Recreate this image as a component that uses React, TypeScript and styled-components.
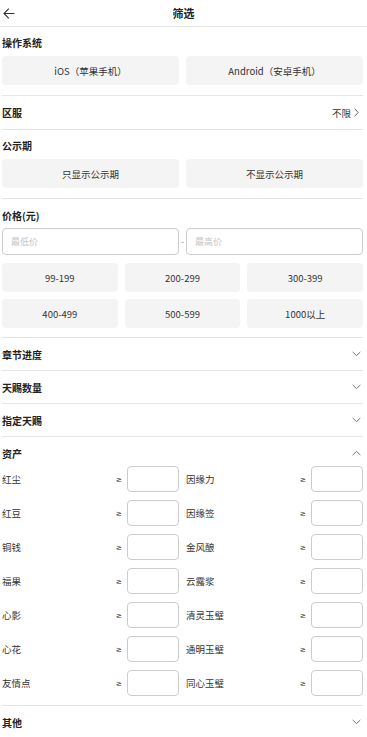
import React from "react";
import styled, { createGlobalStyle } from "styled-components";

const GlobalStyle = createGlobalStyle`
  html, body { margin: 0; padding: 0; background: #fff; }
  body {
    font-family: "Noto Sans CJK SC", "Noto Sans", sans-serif;
    color: #333;
  }
  * { box-sizing: border-box; }
`;

const Page = styled.div`
  width: 367px;
  background: #fff;
`;

const Header = styled.header`
  height: 27px;
  display: grid;
  grid-template-columns: 40px 1fr 40px;
  align-items: center;
  border-bottom: 1px solid #e6e6e6;
`;

const BackButton = styled.button`
  border: none;
  background: none;
  padding: 0 0 0 3px;
  height: 26px;
  display: flex;
  align-items: center;
  cursor: pointer;
`;

const Title = styled.h1`
  margin: 0;
  text-align: center;
  font-size: 11px;
  font-weight: 700;
  color: #222;
  line-height: 26px;
`;

const Body = styled.main`
  padding: 0 4px 0 2px;
`;

const Section = styled.section<{ $top?: number; $bottom?: number }>`
  padding: ${(p) => p.$top ?? 9}px 0 ${(p) => p.$bottom ?? 10}px;
  border-bottom: 1px solid #e5e5e5;
`;

const SectionTitle = styled.div<{ $gap?: number }>`
  font-size: 10px;
  font-weight: 700;
  line-height: 14px;
  color: #222;
  margin-bottom: ${(p) => p.$gap ?? 6}px;
`;

const OptionGrid = styled.div<{ $cols: number }>`
  display: grid;
  grid-template-columns: repeat(${(p) => p.$cols}, 1fr);
  column-gap: 7px;
  row-gap: 7px;
`;

const OptionButton = styled.button`
  height: 29px;
  border: none;
  border-radius: 4px;
  background: #f4f4f4;
  color: #333;
  font-family: inherit;
  font-size: 9.5px;
  padding: 0;
  cursor: pointer;
`;

const LinkRow = styled.div`
  height: 34px;
  display: flex;
  align-items: center;
  justify-content: space-between;
  border-bottom: 1px solid #e5e5e5;
  padding-right: 4px;
`;

const RowLabel = styled.span`
  font-size: 10px;
  font-weight: 700;
  color: #222;
`;

const RowValue = styled.span`
  display: flex;
  align-items: center;
  gap: 3px;
  font-size: 9.5px;
  color: #333;
`;

const PriceRow = styled.div`
  display: flex;
  align-items: center;
  margin-bottom: 8px;
`;

const TextInput = styled.input`
  flex: 1;
  min-width: 0;
  height: 27px;
  border: 1px solid #cccccc;
  border-radius: 4px;
  padding: 0 8px;
  font-family: inherit;
  font-size: 9px;
  color: #333;
  outline: none;
  &::placeholder { color: #c4c4c4; }
`;

const Dash = styled.span`
  width: 7px;
  text-align: center;
  font-size: 9px;
  color: #999;
`;

const AccordionRow = styled.div`
  height: 33px;
  display: flex;
  align-items: center;
  justify-content: space-between;
  border-bottom: 1px solid #e5e5e5;
  padding-right: 2px;
`;

const AssetSection = styled.section`
  padding-bottom: 9px;
  border-bottom: 1px solid #e5e5e5;
`;

const AssetHeader = styled.div`
  height: 23px;
  padding-top: 9px;
  display: flex;
  align-items: center;
  justify-content: space-between;
  padding-right: 2px;
`;

const AssetGrid = styled.div`
  margin-top: 6px;
  display: grid;
  grid-template-columns: 1fr 1fr;
  column-gap: 7px;
  row-gap: 8px;
`;

const AssetCell = styled.label`
  display: flex;
  align-items: center;
`;

const AssetName = styled.span`
  flex: 1;
  font-size: 9.5px;
  color: #333;
`;

const Ge = styled.span`
  font-family: "DejaVu Sans", "Noto Sans", sans-serif;
  font-size: 7.5px;
  color: #333;
  margin-right: 5px;
`;

const AssetInput = styled.input`
  width: 52px;
  height: 26px;
  border: 1px solid #cccccc;
  border-radius: 4px;
  outline: none;
  font-family: inherit;
  font-size: 9px;
  padding: 0 4px;
`;

const LastRow = styled.div`
  height: 32px;
  display: flex;
  align-items: center;
  justify-content: space-between;
  padding-right: 2px;
`;

const ChevronDown = () => (
  <svg width="9" height="6" viewBox="0 0 9 6" fill="none">
    <path d="M0.7 1 L4.5 4.6 L8.3 1" stroke="#777" strokeWidth="1" />
  </svg>
);

const ChevronUp = () => (
  <svg width="9" height="6" viewBox="0 0 9 6" fill="none">
    <path d="M0.7 5 L4.5 1.4 L8.3 5" stroke="#777" strokeWidth="1" />
  </svg>
);

const ChevronRight = () => (
  <svg width="5" height="9" viewBox="0 0 5 9" fill="none">
    <path d="M0.6 0.6 L4.2 4.5 L0.6 8.4" stroke="#666" strokeWidth="1" />
  </svg>
);

const BackArrow = () => (
  <svg width="12" height="11" viewBox="0 0 12 11" fill="none">
    <path d="M11.5 5.5 H1 M5.8 0.7 L1 5.5 L5.8 10.3" stroke="#333" strokeWidth="1.1" />
  </svg>
);

const prices = ["99-199", "200-299", "300-399", "400-499", "500-599", "1000以上"];
const assets: [string, string][] = [
  ["红尘", "因缘力"],
  ["红豆", "因缘签"],
  ["铜钱", "金风酿"],
  ["福果", "云露浆"],
  ["心影", "清灵玉璧"],
  ["心花", "通明玉璧"],
  ["友情点", "同心玉璧"],
];
const accordions = ["章节进度", "天赐数量", "指定天赐"];

export default function App() {
  return (
    <Page>
      <GlobalStyle />
      <Header>
        <BackButton aria-label="返回">
          <BackArrow />
        </BackButton>
        <Title>筛选</Title>
        <span />
      </Header>
      <Body>
        <Section>
          <SectionTitle>操作系统</SectionTitle>
          <OptionGrid $cols={2}>
            <OptionButton>iOS（苹果手机）</OptionButton>
            <OptionButton>Android（安卓手机）</OptionButton>
          </OptionGrid>
        </Section>
        <LinkRow>
          <RowLabel>区服</RowLabel>
          <RowValue>
            不限
            <ChevronRight />
          </RowValue>
        </LinkRow>
        <Section>
          <SectionTitle>公示期</SectionTitle>
          <OptionGrid $cols={2}>
            <OptionButton>只显示公示期</OptionButton>
            <OptionButton>不显示公示期</OptionButton>
          </OptionGrid>
        </Section>
        <Section $top={10} $bottom={9}>
          <SectionTitle $gap={5}>价格(元)</SectionTitle>
          <PriceRow>
            <TextInput placeholder="最低价" />
            <Dash>-</Dash>
            <TextInput placeholder="最高价" />
          </PriceRow>
          <OptionGrid $cols={3}>
            {prices.map((p) => (
              <OptionButton key={p}>{p}</OptionButton>
            ))}
          </OptionGrid>
        </Section>
        {accordions.map((a) => (
          <AccordionRow key={a}>
            <RowLabel>{a}</RowLabel>
            <ChevronDown />
          </AccordionRow>
        ))}
        <AssetSection>
          <AssetHeader>
            <RowLabel>资产</RowLabel>
            <ChevronUp />
          </AssetHeader>
          <AssetGrid>
            {assets.flat().map((name) => (
              <AssetCell key={name}>
                <AssetName>{name}</AssetName>
                <Ge>≥</Ge>
                <AssetInput />
              </AssetCell>
            ))}
          </AssetGrid>
        </AssetSection>
        <LastRow>
          <RowLabel>其他</RowLabel>
          <ChevronDown />
        </LastRow>
      </Body>
    </Page>
  );
}
